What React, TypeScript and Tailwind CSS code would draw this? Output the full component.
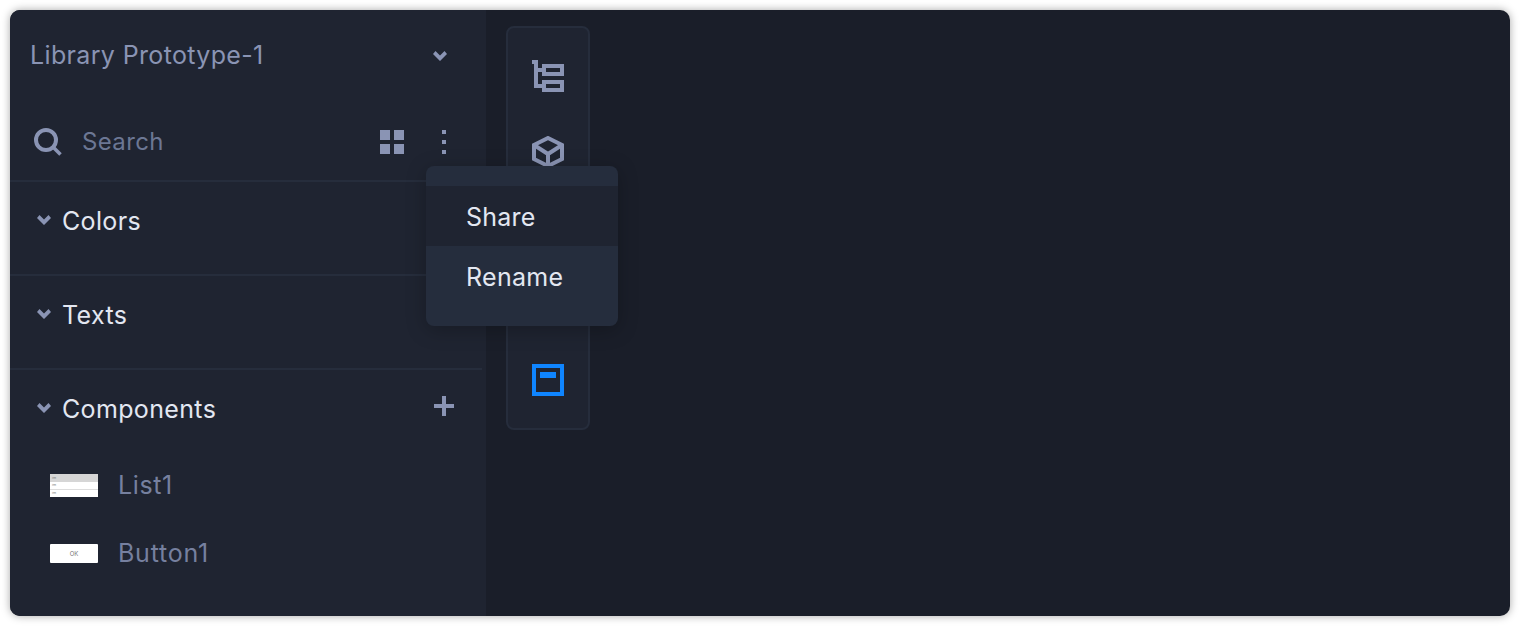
import React from 'react';

const Chevron = ({ className }: { className: string }) => (
  <svg viewBox="0 0 14 10" className={className} fill="#8a94b4">
    <path d="M2.5 0 L7 4.5 L11.5 0 L14 3 L7 10 L0 3 Z" />
  </svg>
);

const Section = ({ title, plus }: { title: string; plus?: boolean }) => (
  <div className="flex h-[92px] items-start pt-[24px] pl-[27px] pr-[28px]">
    <Chevron className="mt-[9px] h-[10px] w-[14px]" />
    <span className="ml-[11px] text-[25px] leading-[30px] tracking-[0.35px] text-[#e3e7f1]">{title}</span>
    {plus && (
      <svg viewBox="0 0 20 20" className="ml-auto mt-[2px] h-[20px] w-[20px]" fill="#8a94b4">
        <path d="M8 0h4v8H20v4h-8V20H8v-8H0V8h8z" />
      </svg>
    )}
  </div>
);

const ToolIcon = ({ children }: { children?: React.ReactNode }) => (
  <div className="h-[32px] w-[32px]">{children}</div>
);

export default function App() {
  return (
    <div className="h-[626px] w-[1520px] bg-white p-[10px] font-['Inter',sans-serif]">
      <div className="relative flex h-[606px] overflow-hidden rounded-[10px] bg-[#1a1e29] shadow-[0_0_8px_rgba(0,0,0,0.35)]">
        {/* library sidebar */}
        <div className="h-full w-[476px] shrink-0 bg-[#1f2431]">
          <div className="w-[472px]">
            <div className="flex h-[92px] items-center pl-[20px] pr-[35px]">
              <span className="text-[25px] tracking-[0.35px] text-[#8a94b4]">Library Prototype-1</span>
              <Chevron className="ml-auto h-[10px] w-[14px]" />
            </div>
            <div className="flex h-[80px] items-center border-b-2 border-[#262d3c] pt-[2px] pl-[24px] pr-[36px]">
              <svg viewBox="0 0 28 28" className="h-[28px] w-[28px]" fill="none" stroke="#8a94b4" strokeWidth={4}>
                <circle cx="12" cy="12" r="10" />
                <path d="M19.5 19.5 L26.5 26.5" strokeWidth={3.5} />
              </svg>
              <span className="ml-[20px] text-[24px] tracking-[0.35px] text-[#6c7794]">Search</span>
              <div className="ml-auto grid grid-cols-2 gap-[4px]">
                <div className="h-[10px] w-[10px] bg-[#8a94b4]" />
                <div className="h-[10px] w-[10px] bg-[#8a94b4]" />
                <div className="h-[10px] w-[10px] bg-[#8a94b4]" />
                <div className="h-[10px] w-[10px] bg-[#8a94b4]" />
              </div>
              <div className="ml-[38px] flex flex-col gap-[6px]">
                <div className="h-[4px] w-[4px] bg-[#8a94b4]" />
                <div className="h-[4px] w-[4px] bg-[#8a94b4]" />
                <div className="h-[4px] w-[4px] bg-[#8a94b4]" />
              </div>
            </div>
            <div className="border-b-2 border-[#262d3c]">
              <Section title="Colors" />
            </div>
            <div className="border-b-2 border-[#262d3c]">
              <Section title="Texts" />
            </div>
            <Section title="Components" plus />
            <div className="mt-[5px] flex items-center pl-[40px]">
              <div className="flex h-[23px] w-[48px] flex-col bg-white">
                <div className="flex h-[8px] items-center bg-[#d6d6d6] pl-[2px] text-[2px] text-[#777]">Item</div>
                <div className="flex h-[8px] items-center border-b border-[#ddd] pl-[2px] text-[2px] text-[#777]">Item</div>
                <div className="flex h-[7px] items-center pl-[2px] text-[2px] text-[#777]">Item</div>
              </div>
              <span className="ml-[20px] text-[25px] tracking-[0.6px] text-[#76809f]">List1</span>
            </div>
            <div className="mt-[30px] flex items-center pl-[40px]">
              <div className="flex h-[19px] w-[48px] items-center justify-center rounded-[1px] bg-white text-[6px] text-[#777]">
                OK
              </div>
              <span className="ml-[20px] text-[25px] tracking-[0.75px] text-[#76809f]">Button1</span>
            </div>
          </div>
        </div>

        {/* tool strip */}
        <div className="ml-[20px] mt-[16px] flex h-[404px] w-[84px] flex-col items-center gap-[44px] rounded-[8px] border-2 border-[#262d3c] bg-[#1f2431] pt-[32px]">
          <ToolIcon>
            <svg viewBox="0 0 32 32" className="h-[32px] w-[32px]" fill="#8a94b4" fillRule="evenodd">
              <path d="M0 0H6V8H10V4H32V16H10V12H6V24H10V20H32V32H10V28H2V4H0Z M14 8V12H28V8Z M14 24V28H28V24Z" />
            </svg>
          </ToolIcon>
          <ToolIcon>
            <svg viewBox="0 0 32 32" className="h-[32px] w-[32px]" fill="none" stroke="#8a94b4" strokeWidth={4}>
              <path d="M16 2 L30 9 V23 L16 30 L2 23 V9 Z" />
              <path d="M2 9 L16 18 L30 9 M16 18 V30" />
            </svg>
          </ToolIcon>
          <ToolIcon />
          <ToolIcon />
          <ToolIcon>
            <svg viewBox="0 0 32 32" className="h-[32px] w-[32px]" fill="none">
              <rect x="2" y="2" width="28" height="28" stroke="#0f85ff" strokeWidth={4} />
              <rect x="8" y="8" width="16" height="6" fill="#0f85ff" />
            </svg>
          </ToolIcon>
        </div>

        {/* dropdown over the strip */}
        <div className="absolute left-[416px] top-[156px] h-[160px] w-[192px] overflow-hidden rounded-[8px] bg-[#252d3d] shadow-[0_4px_20px_rgba(0,0,0,0.25)]">
          <div className="mt-[20px] flex h-[60px] items-center bg-[#1f2431] pl-[40px] pt-[4px] text-[25px] tracking-[0.2px] text-[#e3e7f1]">
            Share
          </div>
          <div className="flex h-[60px] items-center pl-[40px] pt-[4px] text-[25px] tracking-[0.3px] text-[#e3e7f1]">
            Rename
          </div>
        </div>
      </div>
    </div>
  );
}
